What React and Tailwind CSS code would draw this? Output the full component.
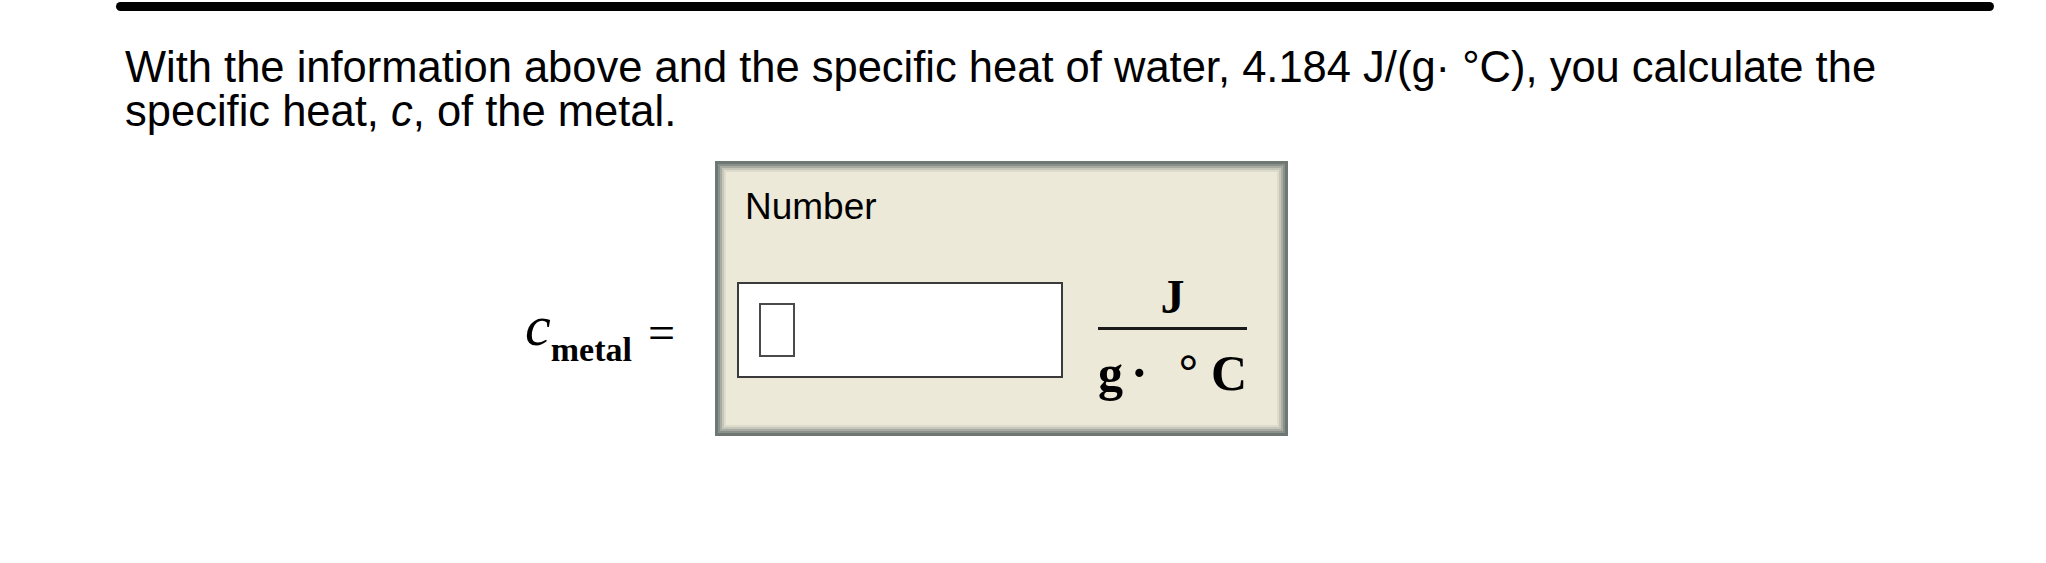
import React from 'react'

const serif = "font-['Liberation_Serif','Times_New_Roman',serif]"

const MetalLabel = () => (
  <div className={`w-[200px] pt-[136px] pr-[40px] text-right text-black ${serif}`}>
    <span className="italic text-[58px] leading-none">c</span>
    <span className="font-bold text-[34px] leading-none align-[-16px]">metal</span>
    <span className="ml-[16px] text-[48px] leading-none align-[-4px]">=</span>
  </div>
)

const Units = () => (
  <div className={`-mt-[9px] flex w-[149px] flex-col items-center font-bold text-black ${serif}`}>
    <div className="text-[48px] leading-[48px]">J</div>
    <div className="mt-[6px] h-[3px] w-full bg-[#1a1a1a]" />
    <div className="mt-[19px] flex w-full items-baseline justify-between text-[50px] leading-[48px]">
      <span>
        g<span className="ml-[8px]">·</span>
      </span>
      <span className="ml-[18px] text-[48px] relative -top-[2px]">°</span>
      <span>C</span>
    </div>
  </div>
)

const AnswerBox = () => (
  <div className="w-[573px] h-[275px] border-[3px] border-[#6e7772] bg-[#ece9d9] shadow-[inset_0_0_0_2px_#8a908b,inset_0_0_0_4px_#a8aba2,inset_0_0_0_6px_#c6c6ba,inset_0_0_0_8px_#dddbcc]">
    <div className="pl-[27px] pt-[24px] font-['Liberation_Sans',Arial,sans-serif] text-[37px] leading-none text-black">
      Number
    </div>
    <div className="mt-[57px] ml-[19px] flex items-start gap-[35px]">
      <div className="flex h-[96px] w-[326px] items-center border-2 border-[#3a3a3a] bg-white pl-[20px]">
        <div className="h-[54px] w-[36px] border-2 border-[#4a4a4a] bg-white" />
      </div>
      <Units />
    </div>
  </div>
)

const App = () => {
  return (
    <div className="w-[2046px] h-[563px] bg-white overflow-hidden">
      <div className="ml-[116px] mt-[2px] h-[9px] w-[1878px] rounded-[5px] bg-black" />
      <p className="mt-[34px] pl-[125px] font-['Liberation_Sans',Arial,sans-serif] text-[43.5px] leading-[44px] text-black">
        With the information above and the specific heat of water, 4.184 J/(g· °C), you calculate the
        <br />
        specific heat, <i>c</i>, of the metal.
      </p>
      <div className="mt-[28px] ml-[515px] flex items-start">
        <MetalLabel />
        <AnswerBox />
      </div>
    </div>
  )
}

export default App
